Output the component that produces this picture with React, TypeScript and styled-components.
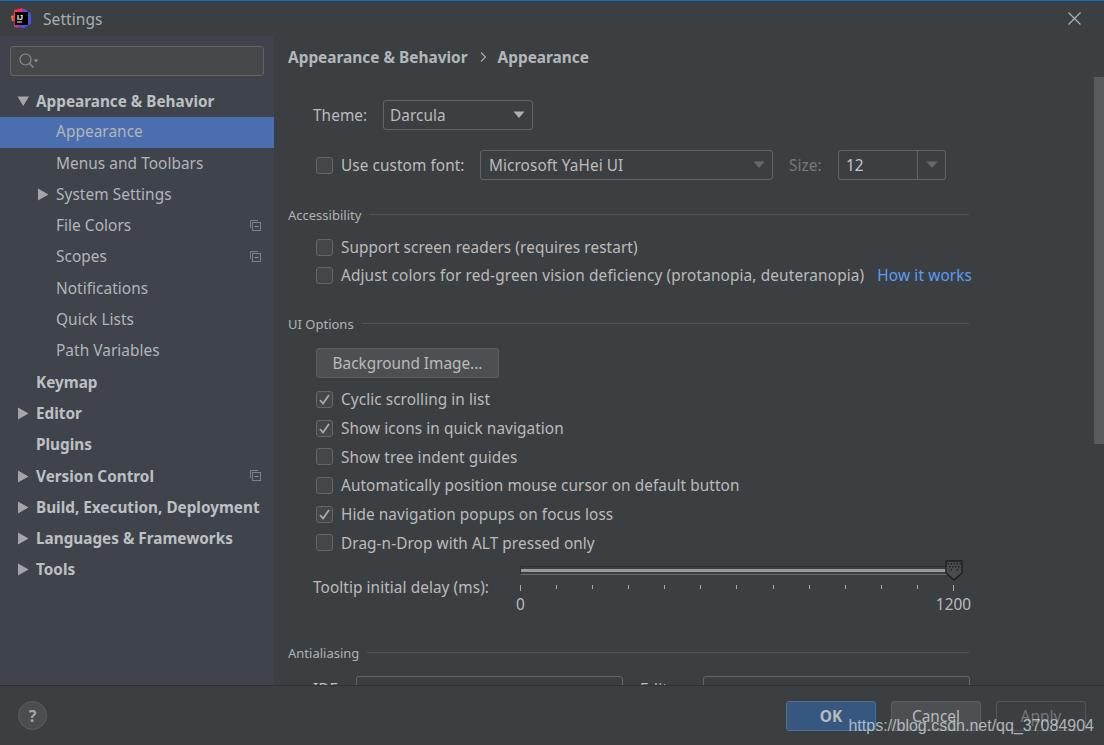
import React from 'react';
import styled, { createGlobalStyle } from 'styled-components';

const GlobalStyle = createGlobalStyle`
	html, body {
		margin: 0;
		padding: 0;
		width: 1104px;
		height: 745px;
		overflow: hidden;
		background: #3c3f41;
	}
	* {
		box-sizing: border-box;
	}
`;

const Dialog = styled.div`
	width: 1104px;
	height: 745px;
	display: flex;
	flex-direction: column;
	background: #3c3f41;
	border-top: 1px solid #0a6fc4;
	color: #bbbbbb;
	font-family: 'Noto Sans', 'Liberation Sans', sans-serif;
	font-size: 15.35px;
	letter-spacing: 0.08px;
	position: relative;
	overflow: hidden;
`;

const TitleBar = styled.div`
	height: 35px;
	flex: none;
	display: flex;
	align-items: center;
	padding: 0 23px 0 11px;
	gap: 11px;
`;

const TitleText = styled.div`
	flex: 1;
	font-size: 15.5px;
	color: #a9adb0;
`;

const Content = styled.div`
	flex: 1;
	min-height: 0;
	display: flex;
`;

const Sidebar = styled.div`
	width: 274px;
	flex: none;
	background: #3e434c;
	padding-top: 10px;
`;

const SearchBox = styled.div`
	height: 30px;
	margin: 0 10px 9.5px;
	background: #45494a;
	border: 1px solid #646464;
	border-radius: 3px;
	display: flex;
	align-items: center;
	padding-left: 7px;
`;

const TreeRow = styled.div<{ $selected?: boolean; $depth: number; $bold?: boolean }>`
	height: 31.26px;
	display: flex;
	align-items: center;
	position: relative;
	padding: 0 13px 1px ${(p) => (p.$depth === 0 ? 36 : 56)}px;
	background: ${(p) => (p.$selected ? '#4b6eaf' : 'transparent')};
	font-weight: ${(p) => (p.$bold ? 700 : 400)};
	font-size: ${(p) => (p.$bold ? 15.3 : 15.4)}px;
	letter-spacing: ${(p) => (p.$bold ? 0 : 0.05)}px;
	color: ${(p) => (p.$bold ? '#bdc0c2' : '#b3b6b8')};
`;

const TreeLabel = styled.span`
	flex: 1;
	white-space: nowrap;
`;

const ArrowSlot = styled.span<{ $depth: number }>`
	position: absolute;
	left: ${(p) => (p.$depth === 0 ? 17 : 37)}px;
	top: 9px;
	display: flex;
`;

const Main = styled.div`
	flex: 1;
	min-width: 0;
	position: relative;
	overflow: hidden;
`;

const Breadcrumb = styled.div`
	height: 42px;
	display: flex;
	align-items: center;
	padding-left: 14px;
	gap: 12px;
	font-weight: 700;
	font-size: 15.4px;
	letter-spacing: 0;
	color: #b4b7b9;
`;

const ScrollBody = styled.div`
	padding: 22px 0 0 14px;
	width: 695px;
`;

const Scrollbar = styled.div`
	position: absolute;
	right: 0;
	top: 41px;
	width: 10px;
	height: 367px;
	background: #595b5d;
`;

const Row = styled.div<{ $top?: number; $indent?: number }>`
	height: 30px;
	display: flex;
	align-items: center;
	margin-top: ${(p) => p.$top ?? 0}px;
	padding-left: ${(p) => p.$indent ?? 0}px;
`;

const ThemeLabel = styled.span`
	width: 70px;
	flex: none;
	margin-top: -1px;
`;

const Select = styled.div<{ $width: number; $pad: number }>`
	width: ${(p) => p.$width}px;
	height: 30px;
	flex: none;
	border: 1px solid #646464;
	border-radius: 3px;
	display: flex;
	align-items: center;
	justify-content: space-between;
	padding: 0 7px 0 ${(p) => p.$pad}px;
`;

const FontCheckLabel = styled.span`
	width: 139px;
	flex: none;
	white-space: nowrap;
`;

const SizeLabel = styled.span`
	width: 33px;
	color: #787878;
	margin: 0 16px 0 16px;
`;

const ComboEdit = styled.div`
	width: 108px;
	height: 30px;
	border: 1px solid #646464;
	border-radius: 3px;
	display: flex;
	align-items: center;
`;

const ComboValue = styled.span`
	width: 79px;
	height: 100%;
	padding-left: 7px;
	display: flex;
	align-items: center;
	border-right: 1px solid #646464;
	color: #c4c8cc;
`;

const ComboArrow = styled.span`
	flex: 1;
	display: flex;
	justify-content: center;
`;

const SectionTitle = styled.div<{ $top: number }>`
	height: 20px;
	display: flex;
	align-items: center;
	gap: 8px;
	margin-top: ${(p) => p.$top}px;
	font-size: 13px;
	letter-spacing: 0;
	color: #b0b3b5;
	&::after {
		content: '';
		flex: 1;
		height: 1px;
		background: #525455;
		margin-top: -2px;
	}
`;

const CheckRow = styled.label<{ $height: number; $top?: number; $spacing?: number }>`
	height: ${(p) => p.$height}px;
	margin-top: ${(p) => p.$top ?? 0}px;
	padding-left: 28px;
	display: flex;
	align-items: center;
	white-space: nowrap;
	letter-spacing: ${(p) => p.$spacing ?? 0.08}px;
`;

const CheckBox = styled.span`
	width: 17px;
	height: 17px;
	flex: none;
	margin-right: 8px;
	background: #42474a;
	border: 1px solid #646668;
	border-radius: 3px;
	display: flex;
	align-items: center;
	justify-content: center;
`;

const Link = styled.span`
	color: #589df6;
	margin-left: 13px;
`;

const PlainButton = styled.div`
	width: 183px;
	height: 30px;
	margin: 14px 0 0 28px;
	background: #4c5052;
	border: 1px solid #5e6060;
	border-radius: 3px;
	display: flex;
	align-items: center;
	justify-content: center;
	letter-spacing: 0;
`;

const SliderRow = styled.div`
	display: flex;
	height: 46px;
	margin-top: 9px;
	padding-left: 25px;
`;

const SliderLabel = styled.span`
	width: 207px;
	flex: none;
	margin-top: 11px;
`;

const Slider = styled.div`
	width: 434px;
	position: relative;
`;

const Track = styled.div`
	width: 428px;
	height: 9px;
	border-top: 1px solid #2f3132;
	border-left: 1px solid #2f3132;
	border-bottom: 1px solid #6a6c6d;
	padding-top: 2px;
	&::before {
		content: '';
		display: block;
		height: 3px;
		background: #9a9a9a;
	}
`;

const ThumbSlot = styled.span`
	position: absolute;
	left: 425px;
	top: -6px;
	display: flex;
`;

const Ticks = styled.div`
	display: flex;
	justify-content: space-between;
	margin-top: 10px;
	height: 6px;
`;

const Tick = styled.span<{ $major: boolean }>`
	width: 1px;
	height: ${(p) => (p.$major ? 6 : 4)}px;
	background: #a9a9a9;
`;

const TickLabels = styled.div`
	display: flex;
	justify-content: space-between;
	margin-top: 3px;
`;

const TickLabel = styled.span`
	width: 1px;
	display: flex;
	justify-content: center;
`;

const ClippedRow = styled.div`
	display: flex;
	align-items: flex-start;
	margin-top: 13px;
	padding-left: 25px;
`;

const ClippedLabel = styled.span<{ $width: number; $pad?: number }>`
	width: ${(p) => p.$width}px;
	flex: none;
	padding: 3px 0 0 ${(p) => p.$pad ?? 0}px;
`;

const ClippedSelect = styled.div<{ $width: number }>`
	width: ${(p) => p.$width}px;
	height: 30px;
	flex: none;
	border: 1px solid #646464;
	border-radius: 3px;
`;

const Footer = styled.div`
	height: 60px;
	flex: none;
	border-top: 1px solid #2f3132;
	display: flex;
	align-items: center;
	justify-content: space-between;
	padding: 0 18px;
	position: relative;
`;

const HelpButton = styled.div`
	width: 29px;
	height: 29px;
	border-radius: 50%;
	background: #4a4e50;
	border: 1px solid #5c5f61;
	display: flex;
	align-items: center;
	justify-content: center;
	font-weight: 700;
	font-size: 16px;
	color: #a8a8a8;
`;

const FooterButtons = styled.div`
	display: flex;
	gap: 15px;
`;

const DialogButton = styled.div<{ $kind: 'default' | 'normal' | 'disabled' }>`
	width: 90px;
	height: 30px;
	border-radius: 3px;
	display: flex;
	align-items: center;
	justify-content: center;
	font-weight: ${(p) => (p.$kind === 'default' ? 700 : 400)};
	color: ${(p) => (p.$kind === 'disabled' ? '#777777' : '#bbbbbb')};
	background: ${(p) =>
		p.$kind === 'default' ? '#365880' : p.$kind === 'normal' ? '#4c5052' : 'transparent'};
	border: 1px solid ${(p) =>
		p.$kind === 'default' ? '#4c708c' : p.$kind === 'normal' ? '#5e6060' : '#555758'};
`;

const Watermark = styled.div`
	position: absolute;
	right: 10px;
	bottom: 10px;
	font-family: 'Liberation Sans', sans-serif;
	font-size: 16px;
	letter-spacing: 0;
	color: rgba(222, 226, 230, 0.72);
	white-space: nowrap;
`;

const Logo = () => (
	<svg width="21" height="21" viewBox="0 0 21 21">
		<path d="M0 8 L4 7 L4 13 L1 13 Z" fill="#f97a12" />
		<path d="M3 2 L11 0 L13 3 L4 15 L2 12 Z" fill="#fe2857" />
		<path d="M6 17 L12 1 L14 1 L20 6 L20 16 L13 20 L7 19 Z" fill="#4a55d6" />
		<path d="M4 13 L9 17 L7 20 L3 19 Z" fill="#c9318e" />
		<rect x="4" y="4" width="13" height="13" fill="#000" />
		<text x="6" y="11.5" fontSize="7" fontWeight="700" fill="#fff" fontFamily="'Liberation Sans', sans-serif">IJ</text>
		<rect x="6" y="13.5" width="5" height="1" fill="#fff" />
	</svg>
);

const CloseIcon = () => (
	<svg width="13" height="13" viewBox="0 0 13 13">
		<path d="M0.5 0.5 L12.5 12.5 M12.5 0.5 L0.5 12.5" stroke="#b0b2b4" strokeWidth="1.2" fill="none" />
	</svg>
);

const SearchIcon = () => (
	<svg width="22" height="18" viewBox="0 0 22 18">
		<circle cx="7.5" cy="7.5" r="5.5" stroke="#8a8d8f" strokeWidth="1.2" fill="none" />
		<path d="M11.5 11.5 L15.5 15.5" stroke="#8a8d8f" strokeWidth="1.4" />
		<path d="M15.5 7.5 H20.5 L18 10.5 Z" fill="#8a8d8f" />
	</svg>
);

const TreeArrow = ({ open }: { open?: boolean }) => (
	<svg width="13" height="13" viewBox="0 0 13 13">
		{open ? <path d="M0.5 1.5 H12 L6.2 11 Z" fill="#a3a5a7" /> : <path d="M1 0.5 L11.5 6.5 L1 12.5 Z" fill="#a3a5a7" />}
	</svg>
);

const ProjectIcon = () => (
	<svg width="11" height="11" viewBox="0 0 11 11">
		<path d="M0.5 8 V0.5 H8" stroke="#7f8284" fill="none" />
		<rect x="2.5" y="2.5" width="8" height="8" stroke="#7f8284" fill="none" />
		<path d="M4.5 6.5 H8.5" stroke="#8f9294" />
	</svg>
);

const ChevronIcon = () => (
	<svg width="6" height="12" viewBox="0 0 6 12">
		<path d="M1 1.5 L5.5 6 L1 10.5" stroke="#a9abad" strokeWidth="1.2" fill="none" />
	</svg>
);

const DropArrow = ({ dim }: { dim?: boolean }) => (
	<svg width="12" height="8" viewBox="0 0 12 8">
		<path d="M0.5 0.5 H11.5 L6 7 Z" fill={dim ? '#666869' : '#aeb0b2'} />
	</svg>
);

const CheckMark = () => (
	<svg width="13" height="13" viewBox="0 0 13 13">
		<path d="M2 7 L5 10.5 L11 2" stroke="#a8aaac" strokeWidth="1.8" fill="none" />
	</svg>
);

const Thumb = () => (
	<svg width="18" height="21" viewBox="0 0 18 21">
		<path d="M1 1 H17 V13 L9 20 L1 13 Z" fill="#4a4c4e" stroke="#1d1e1f" strokeWidth="1.4" />
		{[3, 6, 9, 12, 15].map((x) => (
			<rect key={x} x={x - 0.5} y="3" width="1.5" height="1.5" fill="#1f2021" />
		))}
		{[4.5, 7.5, 10.5, 13.5].map((x) => (
			<rect key={x} x={x - 0.5} y="6" width="1.5" height="1.5" fill="#1f2021" />
		))}
		{[6, 12].map((x) => (
			<rect key={x} x={x - 0.5} y="9" width="1.5" height="1.5" fill="#1f2021" />
		))}
	</svg>
);

const treeItems = [
	{ label: 'Appearance & Behavior', depth: 0, bold: true, arrow: 'open' },
	{ label: 'Appearance', depth: 1, selected: true },
	{ label: 'Menus and Toolbars', depth: 1 },
	{ label: 'System Settings', depth: 1, arrow: 'closed' },
	{ label: 'File Colors', depth: 1, project: true },
	{ label: 'Scopes', depth: 1, project: true },
	{ label: 'Notifications', depth: 1 },
	{ label: 'Quick Lists', depth: 1 },
	{ label: 'Path Variables', depth: 1 },
	{ label: 'Keymap', depth: 0, bold: true },
	{ label: 'Editor', depth: 0, bold: true, arrow: 'closed' },
	{ label: 'Plugins', depth: 0, bold: true },
	{ label: 'Version Control', depth: 0, bold: true, arrow: 'closed', project: true },
	{ label: 'Build, Execution, Deployment', depth: 0, bold: true, arrow: 'closed' },
	{ label: 'Languages & Frameworks', depth: 0, bold: true, arrow: 'closed' },
	{ label: 'Tools', depth: 0, bold: true, arrow: 'closed' },
];

const uiOptions = [
	{ label: 'Cyclic scrolling in list', checked: true },
	{ label: 'Show icons in quick navigation', checked: true },
	{ label: 'Show tree indent guides', checked: false },
	{ label: 'Automatically position mouse cursor on default button', checked: false },
	{ label: 'Hide navigation popups on focus loss', checked: true },
	{ label: 'Drag-n-Drop with ALT pressed only', checked: false },
];

const App = () => {
	const ticks = Array.from({ length: 13 }, (_, i) => i);

	return (
		<Dialog>
			<GlobalStyle />
			<TitleBar>
				<Logo />
				<TitleText>Settings</TitleText>
				<CloseIcon />
			</TitleBar>
			<Content>
				<Sidebar>
					<SearchBox>
						<SearchIcon />
					</SearchBox>
					{treeItems.map((item) => (
						<TreeRow key={item.label} $depth={item.depth} $bold={item.bold} $selected={item.selected}>
							{item.arrow && (
								<ArrowSlot $depth={item.depth}>
									<TreeArrow open={item.arrow === 'open'} />
								</ArrowSlot>
							)}
							<TreeLabel>{item.label}</TreeLabel>
							{item.project && <ProjectIcon />}
						</TreeRow>
					))}
				</Sidebar>
				<Main>
					<Breadcrumb>
						<span>Appearance &amp; Behavior</span>
						<ChevronIcon />
						<span>Appearance</span>
					</Breadcrumb>
					<ScrollBody>
						<Row $indent={25}>
							<ThemeLabel>Theme:</ThemeLabel>
							<Select $width={150} $pad={6}>
								<span>Darcula</span>
								<DropArrow />
							</Select>
						</Row>
						<Row $top={20} $indent={28}>
							<CheckBox />
							<FontCheckLabel>Use custom font:</FontCheckLabel>
							<Select $width={293} $pad={8}>
								<span>Microsoft YaHei UI</span>
								<DropArrow dim />
							</Select>
							<SizeLabel>Size:</SizeLabel>
							<ComboEdit>
								<ComboValue>12</ComboValue>
								<ComboArrow>
									<DropArrow dim />
								</ComboArrow>
							</ComboEdit>
						</Row>
						<SectionTitle $top={25}>Accessibility</SectionTitle>
						<CheckRow $height={28} $top={8}>
							<CheckBox />
							Support screen readers (requires restart)
						</CheckRow>
						<CheckRow $height={28} $spacing={0.14}>
							<CheckBox />
							Adjust colors for red-green vision deficiency (protanopia, deuteranopia)
							<Link>How it works</Link>
						</CheckRow>
						<SectionTitle $top={25}>UI Options</SectionTitle>
						<PlainButton>Background Image...</PlainButton>
						{uiOptions.map((option, index) => (
							<CheckRow key={option.label} $height={28.7} $top={index === 0 ? 7 : 0}>
								<CheckBox>{option.checked && <CheckMark />}</CheckBox>
								{option.label}
							</CheckRow>
						))}
						<SliderRow>
							<SliderLabel>Tooltip initial delay (ms):</SliderLabel>
							<Slider>
								<Track />
								<ThumbSlot>
									<Thumb />
								</ThumbSlot>
								<Ticks>
									{ticks.map((t) => (
										<Tick key={t} $major={t === 0 || t === 12} />
									))}
								</Ticks>
								<TickLabels>
									<TickLabel>0</TickLabel>
									<TickLabel>1200</TickLabel>
								</TickLabels>
							</Slider>
						</SliderRow>
						<SectionTitle $top={31}>Antialiasing</SectionTitle>
						<ClippedRow>
							<ClippedLabel $width={43}>IDE:</ClippedLabel>
							<ClippedSelect $width={267} />
							<ClippedLabel $width={80} $pad={17}>Editor:</ClippedLabel>
							<ClippedSelect $width={267} />
						</ClippedRow>
					</ScrollBody>
					<Scrollbar />
				</Main>
			</Content>
			<Footer>
				<HelpButton>?</HelpButton>
				<FooterButtons>
					<DialogButton $kind="default">OK</DialogButton>
					<DialogButton $kind="normal">Cancel</DialogButton>
					<DialogButton $kind="disabled">Apply</DialogButton>
				</FooterButtons>
				<Watermark>https://blog.csdn.net/qq_37084904</Watermark>
			</Footer>
		</Dialog>
	);
};

export default App;
